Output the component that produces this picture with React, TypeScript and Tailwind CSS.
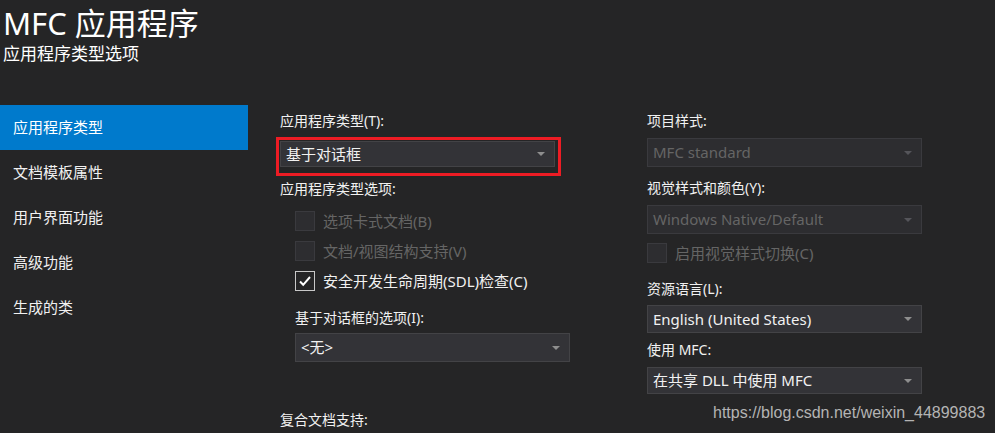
import React from 'react'

const FONT = "font-['Noto_Sans','Noto_Sans_CJK_SC',sans-serif]"

const SIDE = ['应用程序类型', '文档模板属性', '用户界面功能', '高级功能', '生成的类']

function Arrow({ dim }: { dim?: boolean }) {
  return (
    <svg width="8" height="4" viewBox="0 0 8 4" className="shrink-0">
      <path d="M0 0h8L4 4z" fill={dim ? '#55555a' : '#8e8e8e'} />
    </svg>
  )
}

function Select({ value, dim, h = 'h-[29px]', className = '' }: { value: string; dim?: boolean; h?: string; className?: string }) {
  return (
    <div className={`${h} w-[275px] flex items-center justify-between pl-[5px] pr-[9px] border ${dim ? 'bg-[#2d2d30] border-[#3a3a3e] text-[#656565]' : 'bg-[#333337] border-[#434346] text-[#f1f1f1]'} text-[15px] ${className}`}>
      <span className="leading-none">{value}</span>
      <Arrow dim={dim} />
    </div>
  )
}

function Check({ label, checked, dim, className = '' }: { label: string; checked?: boolean; dim?: boolean; className?: string }) {
  return (
    <div className={`flex items-center ${className}`}>
      <div className={`w-[20px] h-[20px] border flex items-center justify-center ${dim ? 'border-[#3a3a3e] bg-[#2d2d30]' : 'border-[#c8c8c8] bg-[#252526]'}`}>
        {checked && (
          <svg width="14" height="12" viewBox="0 0 14 12">
            <path d="M2 6.5l3.2 3.3L12 2" stroke="#ffffff" strokeWidth="2" fill="none" />
          </svg>
        )}
      </div>
      <span className={`ml-[8px] text-[15px] ${dim ? 'text-[#656565]' : 'text-[#f1f1f1]'}`}>{label}</span>
    </div>
  )
}

function Label({ children, className = '' }: { children: React.ReactNode; className?: string }) {
  return <div className={`h-[20px] leading-[20px] text-[14px] text-[#f1f1f1] ${className}`}>{children}</div>
}

export default function App() {
  return (
    <div className={`w-[995px] h-[433px] bg-[#252526] text-[#f1f1f1] overflow-hidden ${FONT}`}>
      {/* Header */}
      <div className="h-[105px] pl-[3px]">
        <div className="pt-[4px] h-[40px] text-[31px] leading-[38px] text-white">MFC 应用程序</div>
        <div className="mt-[3px] text-[17px] leading-[22px] text-white">应用程序类型选项</div>
      </div>

      <div className="flex">
        {/* Sidebar */}
        <div className="w-[248px] shrink-0">
          {SIDE.map((s, i) => (
            <div key={s} className={`h-[45px] flex items-center pl-[13px] text-[15px] ${i === 0 ? 'bg-[#007acc] text-white' : 'text-[#f1f1f1]'}`}>
              {s}
            </div>
          ))}
        </div>

        {/* Column 1 */}
        <div className="ml-[32px] w-[310px] flex flex-col">
          <Label className="mt-[6px]">应用程序类型(T):</Label>
          <div className="mt-[6px] -ml-[4px] w-[285px] h-[39px] border-[3px] border-[#ed1c24] pl-[1px] pt-[1px]">
            <Select value="基于对话框" h="h-[26px]" />
          </div>
          <Label className="mt-[3px]">应用程序类型选项:</Label>
          <div className="mt-[7px] ml-[15px]">
            <Check label="选项卡式文档(B)" dim className="h-[30px]" />
            <Check label="文档/视图结构支持(V)" dim className="h-[30px]" />
            <Check label="安全开发生命周期(SDL)检查(C)" checked className="h-[30px]" />
          </div>
          <Label className="mt-[12px] ml-[15px]">基于对话框的选项(I):</Label>
          <Select value="<无>" className="mt-[5px] ml-[15px]" />
          <Label className="mt-[48px]">复合文档支持:</Label>
        </div>

        {/* Column 2 */}
        <div className="ml-[57px] flex flex-col">
          <Label className="mt-[6px]">项目样式:</Label>
          <Select value="MFC standard" dim className="mt-[7px]" />
          <Label className="mt-[11px]">视觉样式和颜色(Y):</Label>
          <Select value="Windows Native/Default" dim className="mt-[7px]" />
          <Check label="启用视觉样式切换(C)" dim className="mt-[9px] h-[20px]" />
          <Label className="mt-[16px]">资源语言(L):</Label>
          <Select value="English (United States)" h="h-[28px]" className="mt-[6px]" />
          <Label className="mt-[7px]">使用 MFC:</Label>
          <Select value="在共享 DLL 中使用 MFC" h="h-[27px]" className="mt-[7px]" />
          <div className="mt-[9px] ml-[66px] h-[20px] leading-[20px] text-[16px] text-[#b4b4b4] font-['Liberation_Sans',Arial,sans-serif] whitespace-nowrap">
            https://blog.csdn.net/weixin_44899883
          </div>
        </div>
      </div>
    </div>
  )
}
